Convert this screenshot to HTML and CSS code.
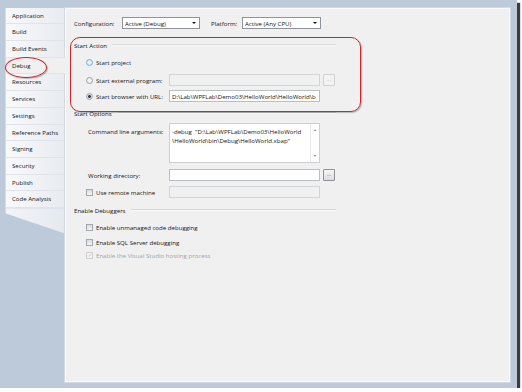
FILE: index.html
```html
<!DOCTYPE html>
<html lang="en">
<head>
    <meta charset="UTF-8">
    <title>Debug Properties</title>
    <link rel="stylesheet" href="styles.css">
</head>
<body>
    <div class="frame">
        <div class="tabs">
            <div class="tab">Application</div>
            <div class="tab">Build</div>
            <div class="tab">Build Events</div>
            <div class="tab active">Debug</div>
            <div class="tab">Resources</div>
            <div class="tab">Services</div>
            <div class="tab">Settings</div>
            <div class="tab">Reference Paths</div>
            <div class="tab">Signing</div>
            <div class="tab">Security</div>
            <div class="tab">Publish</div>
            <div class="tab">Code Analysis</div>
            <div class="tab-tail"></div>
        </div>

        <div class="panel">
            <div class="config-row">
                <span class="config-label">Configuration:</span>
                <div class="select select-config">Active (Debug)<span class="arrow"></span></div>
                <span class="config-label platform-label">Platform:</span>
                <div class="select select-platform">Active (Any CPU)<span class="arrow"></span></div>
            </div>

            <div class="group-head head-action"><span>Start Action</span><i class="rule"></i></div>
            <div class="row row-project">
                <span class="radio focus"></span><span>Start project</span>
            </div>
            <div class="row row-external">
                <div class="field-label"><span class="radio"></span><span>Start external program:</span></div>
                <div class="input disabled"></div>
                <div class="browse disabled">...</div>
            </div>
            <div class="row row-url">
                <div class="field-label"><span class="radio checked"></span><span>Start browser with URL:</span></div>
                <div class="input">D:\Lab\WPFLab\Demo03\HelloWorld\HelloWorld\b</div>
            </div>

            <div class="group-head head-options"><span>Start Options</span><i class="rule"></i></div>
            <div class="row row-args">
                <div class="field-label plain">Command line arguments:</div>
                <div class="textarea">
                    <div class="textarea-text">-debug&nbsp; "D:\Lab\WPFLab\Demo03\HelloWorld<br>\HelloWorld\bin\Debug\HelloWorld.xbap"</div>
                    <div class="scroll"><span>&#9652;</span><span>&#9662;</span></div>
                </div>
            </div>
            <div class="row row-workdir">
                <div class="field-label plain">Working directory:</div>
                <div class="input"></div>
                <div class="browse">...</div>
            </div>
            <div class="row row-remote">
                <div class="field-label"><span class="check"></span><span>Use remote machine</span></div>
                <div class="input disabled"></div>
            </div>

            <div class="group-head head-debuggers"><span>Enable Debuggers</span><i class="rule"></i></div>
            <div class="row row-unmanaged">
                <span class="check"></span><span>Enable unmanaged code debugging</span>
            </div>
            <div class="row row-sql">
                <span class="check"></span><span>Enable SQL Server debugging</span>
            </div>
            <div class="row row-hosting muted">
                <span class="check checked-off">&#10003;</span><span>Enable the Visual Studio hosting process</span>
            </div>
        </div>

        <div class="mark mark-group"></div>
        <div class="mark mark-tab"></div>
    </div>
</body>
</html>
```

FILE: styles.css
```css
body {
    margin: 0;
    background: #fff;
    font-family: "Open Sans", "Noto Sans", sans-serif;
    font-size: 6.1px;
    color: #151515;
}
.frame {
    position: relative;
    width: 517px;
    height: 388px;
    background: #bccada;
    box-shadow: 3px 3px 1px #3c3c3c;
    display: flex;
    align-items: flex-start;
    padding: 7px 0 0 5px;
    box-sizing: border-box;
}

/* left tab strip */
.tabs {
    width: 59px;
    flex: none;
    display: flex;
    flex-direction: column;
    padding-top: 0.5px;
}
.tab {
    height: 16.73px;
    line-height: 16.73px;
    padding-left: 6px;
    box-sizing: border-box;
    background: linear-gradient(to right, #f8f9fb, #e8ebf0);
    border-left: 1px solid #d6dce4;
    border-bottom: 1px solid #e0e4ea;
    white-space: nowrap;
}
.tab.active {
    background: #f0f0f0;
    margin-right: -2px;
    position: relative;
    z-index: 1;
}
.tab-tail {
    height: 25px;
    background: linear-gradient(to right, #f3f4f7, #e5e9ee);
    border-left: 1px solid #d6dce4;
    clip-path: polygon(0 0, 100% 0, 100% 100%, 0 20%);
}

/* main property page */
.panel {
    width: 447px;
    height: 376px;
    flex: none;
    box-sizing: border-box;
    background: #f0f0f0;
    border: 1px solid #d3d9e1;
    box-shadow: inset 0 0 0 1px #fafafa;
    padding: 0 0 0 9px;
}
.config-row {
    display: flex;
    align-items: center;
    height: 12px;
    margin-top: 9px;
}
.config-label {
    width: 48px;
}
.platform-label {
    width: 31px;
    margin-left: 11px;
}
.select {
    position: relative;
    height: 12px;
    line-height: 11px;
    box-sizing: border-box;
    border: 1px solid #8f949a;
    background: #fff;
    padding-left: 2px;
}
.select-config { width: 78px; }
.select-platform { width: 79px; }
.arrow {
    position: absolute;
    right: 3px;
    top: 4px;
    border-left: 2px solid transparent;
    border-right: 2px solid transparent;
    border-top: 2px solid #111;
}

.group-head {
    display: flex;
    align-items: center;
    width: 262px;
    height: 10px;
}
.group-head .rule {
    flex: 1;
    height: 1px;
    margin-left: 5px;
    background: #d6d6d6;
    border-bottom: 1px solid #fbfbfb;
}
.head-action { margin-top: 11px; }
.head-options { margin-top: 6px; }
.head-debuggers { margin-top: 7px; }

.row {
    display: flex;
    align-items: center;
    height: 12px;
    padding-left: 12px;
}
.row-project { margin-top: 6px; }
.row-external { margin-top: 6px; }
.row-url { margin-top: 4px; }
.row-args { margin-top: 5px; height: 40px; align-items: flex-start; }
.row-workdir { margin-top: 6px; }
.row-remote { margin-top: 5px; }
.row-unmanaged { margin-top: 6px; }
.row-sql { margin-top: 3px; }
.row-hosting { margin-top: 1px; }
.muted { color: #a3a3a3; }

.field-label {
    width: 83px;
    flex: none;
    display: flex;
    align-items: center;
    white-space: nowrap;
}
.field-label.plain {
    padding-left: 2px;
    box-sizing: border-box;
}
.row-args .field-label {
    padding-top: 4px;
}

.radio {
    width: 7px;
    height: 7px;
    box-sizing: border-box;
    border-radius: 50%;
    border: 1px solid #9ea3a8;
    background: radial-gradient(circle, #f6f6f6 30%, #d9dbde 100%);
    margin-right: 3px;
    flex: none;
}
.radio.focus {
    border-color: #6fb4e6;
    background: radial-gradient(circle, #eaf6fd 30%, #b6dcf4 100%);
}
.radio.checked {
    background: radial-gradient(circle, #2a3a48 35%, #dcdee1 45%);
}
.check {
    width: 7px;
    height: 7px;
    box-sizing: border-box;
    border: 1px solid #a4a8ad;
    background: linear-gradient(#d8dbde, #f4f4f4);
    margin-right: 3px;
    flex: none;
}
.check.checked-off {
    border-color: #cfcfcf;
    background: #f3f3f3;
    font-size: 5px;
    line-height: 5px;
    text-align: center;
    color: #b8b8b8;
}

.input {
    width: 151px;
    height: 12px;
    line-height: 11px;
    box-sizing: border-box;
    border: 1px solid #b9bec4;
    background: #fff;
    padding-left: 2px;
    overflow: hidden;
    white-space: nowrap;
}
.input.disabled {
    background: #f0f0f0;
    border-color: #d2d4d7;
}
.browse {
    width: 12px;
    height: 12px;
    margin-left: 3px;
    box-sizing: border-box;
    border: 1px solid #8e9297;
    border-radius: 1px;
    background: linear-gradient(#f6f6f6, #dcdcdc);
    font-size: 5px;
    line-height: 9px;
    text-align: center;
    color: #555;
}
.browse.disabled {
    border-color: #cfd1d3;
    background: #f2f2f2;
    color: #bbb;
}

.textarea {
    width: 151px;
    height: 40px;
    box-sizing: border-box;
    border: 1px solid #ccd0d4;
    background: #fff;
    display: flex;
}
.textarea-text {
    flex: 1;
    padding: 3px 0 0 2px;
    line-height: 9px;
    white-space: nowrap;
    overflow: hidden;
}
.scroll {
    width: 8px;
    border-left: 1px solid #e6e6e6;
    display: flex;
    flex-direction: column;
    justify-content: space-between;
    align-items: center;
    font-size: 4px;
    line-height: 8px;
    color: #777;
    padding: 2px 0;
}

/* red callouts drawn over the page */
.mark {
    position: absolute;
    border: 1.5px solid #d2232a;
    box-shadow: 1px 1px 1px rgba(0, 0, 0, 0.25);
    box-sizing: border-box;
    z-index: 2;
}
.mark-group {
    left: 70px;
    top: 37px;
    width: 291px;
    height: 75px;
    border-radius: 10px;
}
.mark-tab {
    left: 5px;
    top: 57px;
    width: 42px;
    height: 21px;
    border-radius: 50%;
}
```
